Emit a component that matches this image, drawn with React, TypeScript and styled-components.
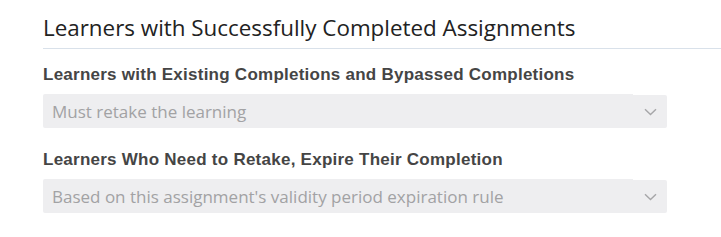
import { createGlobalStyle } from 'styled-components';
import styled from 'styled-components';

const GlobalStyle = createGlobalStyle`
    body {
        margin: 0;
        background: #ffffff;
    }
`;

const Page = styled.div`
    padding: 14px 0 0 43px;
`;

const SectionTitle = styled.h2`
    margin: 0;
    padding-bottom: 6px;
    border-bottom: 1px solid #d9e1ea;
    font-family: 'Open Sans', 'Noto Sans', sans-serif;
    font-weight: 400;
    font-size: 22.4px;
    line-height: 28px;
    color: #222222;
    white-space: nowrap;
`;

const Form = styled.div`
    margin-top: 16px;
    display: grid;
    gap: 22px;
`;

const Field = styled.div`
    display: grid;
    gap: 9px;
    width: 624px;
`;

const Label = styled.label`
    font-family: 'Liberation Sans', Arial, sans-serif;
    font-weight: 700;
    font-size: 17px;
    letter-spacing: 0.25px;
    line-height: 20px;
    color: #454545;
    white-space: nowrap;
`;

const Select = styled.div`
    display: flex;
    height: 34px;
`;

const Value = styled.div`
    flex: 1;
    display: flex;
    align-items: center;
    padding: 0 9px;
    background: #eeeef0;
    border-radius: 2px 0 0 2px;
    font-family: 'Open Sans', 'Noto Sans', sans-serif;
    font-size: 17px;
    color: #a2a2a4;
    white-space: nowrap;
`;

const Arrow = styled.div`
    width: 34px;
    margin-top: 1px;
    display: flex;
    align-items: center;
    justify-content: center;
    background: #eeeef0;
    border-radius: 0 2px 2px 0;
`;

const Chevron = () => (
    <svg width='13' height='8' viewBox='0 0 13 8'>
        <path d='M1 1.2 L6.5 6.5 L12 1.2' fill='none' stroke='#a6a6a8' strokeWidth='1.4' />
    </svg>
);

const fields = [
    { label: 'Learners with Existing Completions and Bypassed Completions', value: 'Must retake the learning' },
    { label: 'Learners Who Need to Retake, Expire Their Completion', value: "Based on this assignment's validity period expiration rule" },
];

export default function App() {
    return (
        <>
            <GlobalStyle />
            <Page>
                <SectionTitle>Learners with Successfully Completed Assignments</SectionTitle>
                <Form>
                    {fields.map(f => (
                        <Field key={f.label}>
                            <Label>{f.label}</Label>
                            <Select>
                                <Value>{f.value}</Value>
                                <Arrow><Chevron /></Arrow>
                            </Select>
                        </Field>
                    ))}
                </Form>
            </Page>
        </>
    );
}
